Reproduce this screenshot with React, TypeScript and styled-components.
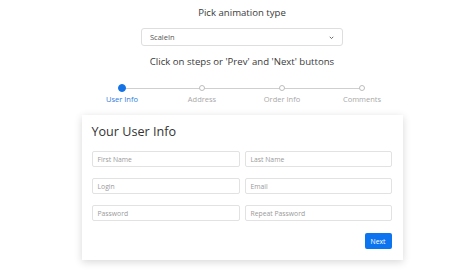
import styled, { createGlobalStyle } from "styled-components";

const GlobalStyle = createGlobalStyle`
  body {
    margin: 0;
    background: #ffffff;
    font-family: "Open Sans", "Liberation Sans", sans-serif;
    color: #333333;
  }
`;

const Page = styled.div`
  display: flex;
  flex-direction: column;
  align-items: center;
  padding: 6px 0 16px 10px;
`;

const Heading = styled.div<{ $gap?: number }>`
  font-size: 9.6px;
  line-height: 14px;
  color: #3a3a3a;
  margin-top: ${(p) => p.$gap ?? 0}px;
`;

const SelectBox = styled.div`
  box-sizing: border-box;
  width: 202px;
  height: 18px;
  margin-top: 8px;
  border: 1px solid #dedede;
  border-radius: 3px;
  display: flex;
  align-items: center;
  justify-content: space-between;
  padding: 0 7px 0 8px;
  font-size: 7.5px;
  color: #555;

  svg {
    width: 7px;
    height: 7px;
  }
`;

const Stepper = styled.div`
  display: grid;
  grid-template-columns: repeat(4, 80px);
  margin-top: 15px;
`;

const Step = styled.div<{ $last?: boolean }>`
  position: relative;
  display: flex;
  flex-direction: column;
  align-items: center;

  &::after {
    content: "";
    display: ${(p) => (p.$last ? "none" : "block")};
    position: absolute;
    top: 3.5px;
    left: 50%;
    width: 80px;
    height: 1px;
    background: #cfcfcf;
  }
`;

const Dot = styled.div<{ $active?: boolean }>`
  box-sizing: border-box;
  position: relative;
  z-index: 1;
  width: 8px;
  height: 8px;
  display: flex;
  align-items: center;
  justify-content: center;

  &::before {
    content: "";
    box-sizing: border-box;
    width: ${(p) => (p.$active ? 8 : 6)}px;
    height: ${(p) => (p.$active ? 8 : 6)}px;
    border-radius: 50%;
    background: ${(p) => (p.$active ? "#1673e6" : "#ffffff")};
    border: 1px solid ${(p) => (p.$active ? "#1673e6" : "#bdbdbd")};
  }
`;

const StepLabel = styled.div<{ $active?: boolean }>`
  margin-top: 2px;
  font-size: 7.5px;
  line-height: 10px;
  color: ${(p) => (p.$active ? "#2f7ce0" : "#a8a8a8")};
`;

const Card = styled.div`
  box-sizing: border-box;
  width: 321px;
  margin-top: 11px;
  padding: 8px 11px 11px 10px;
  background: #ffffff;
  box-shadow: 0 2px 8px rgba(0, 0, 0, 0.16);
`;

const CardTitle = styled.div`
  font-size: 12.6px;
  line-height: 18px;
  color: #333;
`;

const FieldGrid = styled.div`
  display: grid;
  grid-template-columns: 148px 147px;
  column-gap: 5px;
  row-gap: 11px;
  margin-top: 10px;
`;

const Field = styled.div`
  box-sizing: border-box;
  height: 16px;
  border: 1px solid #e2e2e2;
  border-radius: 2px;
  padding-left: 5px;
  display: flex;
  align-items: center;
  font-size: 6.8px;
  color: #9a9a9a;
`;

const Actions = styled.div`
  display: flex;
  justify-content: flex-end;
  margin-top: 12px;
`;

const NextButton = styled.button`
  width: 27px;
  height: 16px;
  border: none;
  border-radius: 2px;
  padding: 0;
  background: #0d74ef;
  color: #ffffff;
  font-family: inherit;
  font-size: 6.8px;
`;

const steps = ["User Info", "Address", "Order Info", "Comments"];
const fields = ["First Name", "Last Name", "Login", "Email", "Password", "Repeat Password"];

const App = () => {
  return (
    <>
      <GlobalStyle />
      <Page>
        <Heading>Pick animation type</Heading>
        <SelectBox>
          <span>ScaleIn</span>
          <svg viewBox="0 0 10 10" fill="none" stroke="#666" strokeWidth="1.4">
            <path d="M2.5 4 L5 6.5 L7.5 4" />
          </svg>
        </SelectBox>
        <Heading $gap={9}>Click on steps or 'Prev' and 'Next' buttons</Heading>
        <Stepper>
          {steps.map((s, i) => (
            <Step key={s} $last={i === steps.length - 1}>
              <Dot $active={i === 0} />
              <StepLabel $active={i === 0}>{s}</StepLabel>
            </Step>
          ))}
        </Stepper>
        <Card>
          <CardTitle>Your User Info</CardTitle>
          <FieldGrid>
            {fields.map((f) => (
              <Field key={f}>{f}</Field>
            ))}
          </FieldGrid>
          <Actions>
            <NextButton>Next</NextButton>
          </Actions>
        </Card>
      </Page>
    </>
  );
};

export default App;
